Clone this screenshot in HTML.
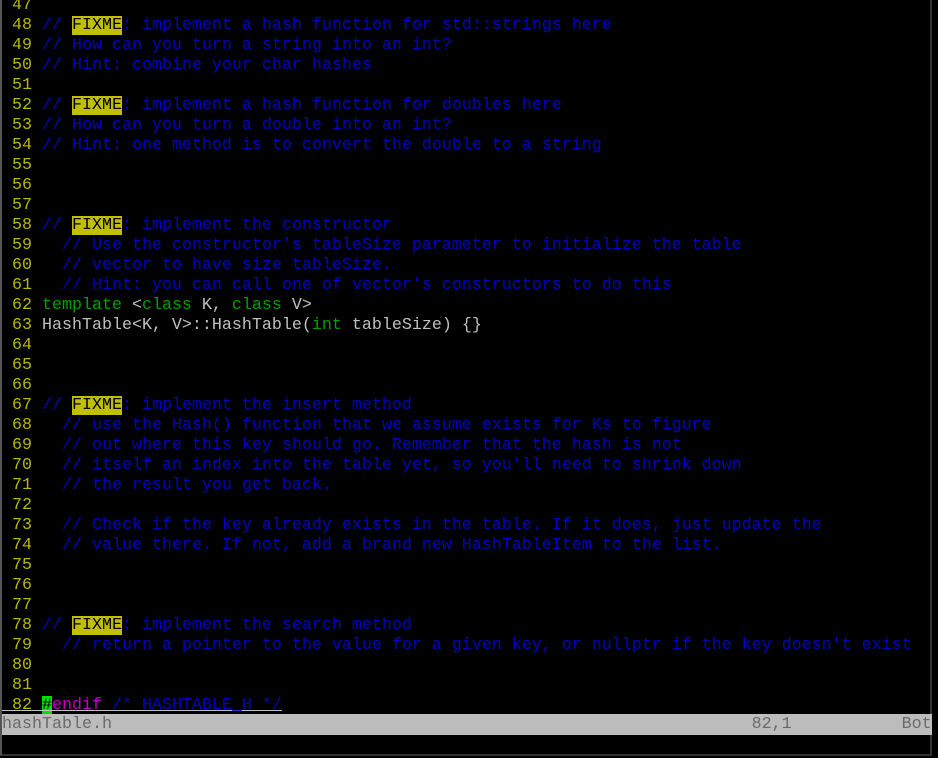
<!DOCTYPE html>
<html><head><meta charset="utf-8"><style>
html,body{margin:0;padding:0;background:#000;width:938px;height:758px;overflow:hidden;position:relative}
#win{position:absolute;left:0;top:0;width:932px;height:756px;border-left:2px solid #555;border-right:2px solid #333;border-bottom:2px solid #333;box-sizing:border-box}
#t{position:absolute;left:2px;top:-4px;font-family:"Liberation Mono",monospace;font-size:16.67px;color:#c0c0c0}
.l{height:20px;line-height:20px;white-space:pre}
.n{color:#b8b800}
.c{color:#0000c8}
.f{background:#c0c000;color:#000}
.g{color:#00a000}
.m{color:#c000c0}
#st{position:absolute;left:2px;top:714px;width:930px;height:21px;background:#bcbcbc;color:#6a6a6a;font-family:"Liberation Mono",monospace;font-size:16.67px;line-height:21px;white-space:pre}
</style></head><body><div id="win"></div>
<div id="t"><div class="l"><span class="n"> 47 </span></div><div class="l"><span class="n"> 48 </span><span class="c">// </span><span class="f">FIXME</span><span class="c">: implement a hash function for std::strings here</span></div><div class="l"><span class="n"> 49 </span><span class="c">// How can you turn a string into an int?</span></div><div class="l"><span class="n"> 50 </span><span class="c">// Hint: combine your char hashes</span></div><div class="l"><span class="n"> 51 </span></div><div class="l"><span class="n"> 52 </span><span class="c">// </span><span class="f">FIXME</span><span class="c">: implement a hash function for doubles here</span></div><div class="l"><span class="n"> 53 </span><span class="c">// How can you turn a double into an int?</span></div><div class="l"><span class="n"> 54 </span><span class="c">// Hint: one method is to convert the double to a string</span></div><div class="l"><span class="n"> 55 </span></div><div class="l"><span class="n"> 56 </span></div><div class="l"><span class="n"> 57 </span></div><div class="l"><span class="n"> 58 </span><span class="c">// </span><span class="f">FIXME</span><span class="c">: implement the constructor</span></div><div class="l"><span class="n"> 59 </span><span class="c">  // Use the constructor's tableSize parameter to initialize the table</span></div><div class="l"><span class="n"> 60 </span><span class="c">  // vector to have size tableSize.</span></div><div class="l"><span class="n"> 61 </span><span class="c">  // Hint: you can call one of vector's constructors to do this</span></div><div class="l"><span class="n"> 62 </span><span class="g">template</span> &lt;<span class="g">class</span> K, <span class="g">class</span> V&gt;</div><div class="l"><span class="n"> 63 </span>HashTable&lt;K, V&gt;::HashTable(<span class="g">int</span> tableSize) {}</div><div class="l"><span class="n"> 64 </span></div><div class="l"><span class="n"> 65 </span></div><div class="l"><span class="n"> 66 </span></div><div class="l"><span class="n"> 67 </span><span class="c">// </span><span class="f">FIXME</span><span class="c">: implement the insert method</span></div><div class="l"><span class="n"> 68 </span><span class="c">  // use the Hash() function that we assume exists for Ks to figure</span></div><div class="l"><span class="n"> 69 </span><span class="c">  // out where this key should go. Remember that the hash is not</span></div><div class="l"><span class="n"> 70 </span><span class="c">  // itself an index into the table yet, so you'll need to shrink down</span></div><div class="l"><span class="n"> 71 </span><span class="c">  // the result you get back.</span></div><div class="l"><span class="n"> 72 </span></div><div class="l"><span class="n"> 73 </span><span class="c">  // Check if the key already exists in the table. If it does, just update the</span></div><div class="l"><span class="n"> 74 </span><span class="c">  // value there. If not, add a brand new HashTableItem to the list.</span></div><div class="l"><span class="n"> 75 </span></div><div class="l"><span class="n"> 76 </span></div><div class="l"><span class="n"> 77 </span></div><div class="l"><span class="n"> 78 </span><span class="c">// </span><span class="f">FIXME</span><span class="c">: implement the search method</span></div><div class="l"><span class="n"> 79 </span><span class="c">  // return a pointer to the value for a given key, or nullptr if the key doesn't exist</span></div><div class="l"><span class="n"> 80 </span></div><div class="l"><span class="n"> 81 </span></div><div class="l" style="text-decoration:underline"><span class="n"> 82 </span><span style="background:#00e000;color:#000">#</span><span class="m">endif</span> <span class="c">/* HASHTABLE_H */</span></div></div>
<div id="st">hashTable.h                                                                82,1           Bot</div>
</body></html>
